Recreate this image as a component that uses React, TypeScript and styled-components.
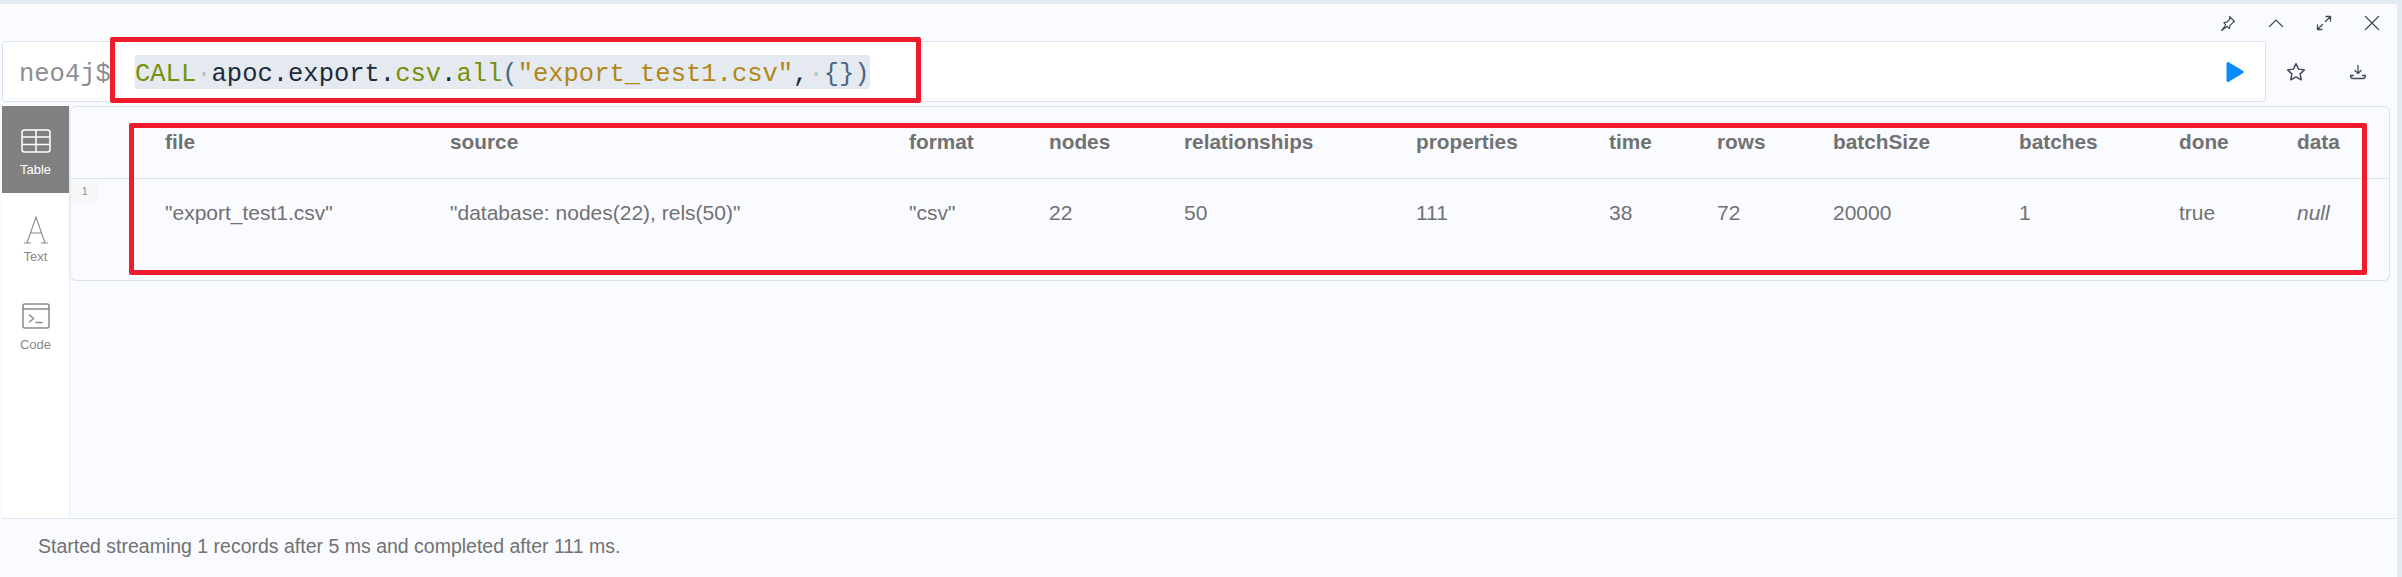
import React from "react";
import styled, { createGlobalStyle } from "styled-components";

const GlobalStyle = createGlobalStyle`
  html, body {
    margin: 0;
    padding: 0;
    background: #e3ebf3;
    overflow: hidden;
  }
  * { box-sizing: border-box; }
`;

const Frame = styled.div`
  width: 2397px;
  height: 573px;
  margin-top: 4px;
  background: #f9fbfe;
  border-top-right-radius: 3px;
  font-family: "Liberation Sans", Arial, sans-serif;
  color: #717172;
  display: flex;
  flex-direction: column;
`;

const TitleBar = styled.div`
  height: 37px;
  padding: 0 9px 0 0;
  display: flex;
  justify-content: flex-end;
  align-items: center;
  gap: 16px;
`;

const IconButton = styled.div`
  width: 32px;
  height: 32px;
  display: flex;
  align-items: center;
  justify-content: center;
  color: #3c4a57;
`;

const EditorRow = styled.div`
  display: flex;
  align-items: center;
  height: 61px;
  margin-left: 2px;
`;

const Editor = styled.div`
  position: relative;
  width: 2264px;
  height: 61px;
  background: #fff;
  border: 1px solid #d7e2ec;
  border-radius: 3px;
  display: flex;
  align-items: center;
  padding: 0 21px 0 16px;
  font-family: "Liberation Mono", monospace;
  font-size: 25.5px;
`;

const Prompt = styled.span`
  width: 116px;
  color: #8a8f94;
  white-space: pre;
  padding-top: 5px;
`;

const Selection = styled.code`
  height: 34px;
  font: inherit;
  line-height: 39px;
  background: #e5eaf1;
  border-radius: 2px;
  white-space: pre;
  color: #1d2b3a;
`;

const Token = styled.span<{ $tone: string }>`
  color: ${({ $tone }) => $tone};
`;

const Dot = styled.span`
  color: #b6c2cc;
`;

const RunButton = styled.div`
  margin-left: auto;
  display: flex;
  align-items: center;
`;

const EditorActions = styled.div`
  display: flex;
  align-items: center;
  margin-left: 14px;
  gap: 30px;
  color: #26323e;
`;

const Body = styled.div`
  flex: 1;
  display: flex;
  flex-direction: column;
  margin-top: 4px;
`;

const Main = styled.div`
  height: 412px;
  display: flex;
  margin-left: 2px;
`;

const Sidebar = styled.nav`
  width: 68px;
  background: #fff;
  border-right: 1px solid #e4ebf2;
  border-radius: 0 0 3px 3px;
  flex-shrink: 0;
`;

const SideTab = styled.div<{ $active?: boolean; $gap: number }>`
  height: 87px;
  display: flex;
  flex-direction: column;
  align-items: center;
  padding-top: 23px;
  gap: ${({ $gap }) => $gap}px;
  font-size: 13px;
  background: ${({ $active }) => ($active ? "#808080" : "transparent")};
  color: ${({ $active }) => ($active ? "#ffffff" : "#8a8a8a")};
`;

const ResultPanel = styled.div`
  position: relative;
  height: 175px;
  width: 2320px;
  background: #f9fbfe;
  border: 1px solid #dbe4ec;
  border-left-color: #e4ebf2;
  border-radius: 6px;
`;

const HeaderRow = styled.div`
  height: 72px;
  border-bottom: 1px solid #d9e4ee;
  display: grid;
  align-items: center;
  grid-template-columns: 94px 285px 459px 140px 135px 232px 193px 108px 116px 186px 160px 118px 90px;
`;

const DataRow = styled.div`
  position: relative;
  height: 101px;
  display: grid;
  padding-top: 21px;
  grid-template-columns: 94px 285px 459px 140px 135px 232px 193px 108px 116px 186px 160px 118px 90px;
`;

const HeaderCell = styled.div`
  font-size: 20.8px;
  font-weight: 700;
  line-height: 24px;
  padding-bottom: 1px;
  white-space: nowrap;
`;

const DataCell = styled.div<{ $italic?: boolean }>`
  font-size: 21px;
  line-height: 26px;
  white-space: nowrap;
  font-style: ${({ $italic }) => ($italic ? "italic" : "normal")};
`;

const RowNumber = styled.span`
  position: absolute;
  top: 0;
  left: 0;
  width: 27px;
  height: 26px;
  padding: 7px 0 0 11px;
  background: #f6f8fa;
  color: #8a8a8a;
  font-size: 10px;
  line-height: 12px;
`;

const Callout = styled.div`
  position: absolute;
  border: 5px solid #f01c2c;
  border-radius: 2px;
  pointer-events: none;
`;

const EditorCallout = styled(Callout)`
  left: 107px;
  top: -5px;
  width: 811px;
  height: 66px;
`;

const TableCallout = styled(Callout)`
  left: 58px;
  top: 16px;
  width: 2238px;
  height: 152px;
`;

const StatusBar = styled.div`
  height: 55px;
  border-top: 1px solid #dbe6f1;
  margin-left: 2px;
  padding: 0 0 0 36px;
  display: flex;
  align-items: center;
  font-size: 19.5px;
  color: #717172;
`;

const columns = ["file", "source", "format", "nodes", "relationships", "properties", "time", "rows", "batchSize", "batches", "done", "data"];
const values = ['"export_test1.csv"', '"database: nodes(22), rels(50)"', '"csv"', "22", "50", "111", "38", "72", "20000", "1", "true", "null"];

const olive = "#75900a";
const amber = "#b2861a";
const slate = "#4a6785";

export default function App() {
  return (
    <>
      <GlobalStyle />
      <Frame>
        <TitleBar>
          <IconButton>
            <svg width="16" height="16" viewBox="0 0 16 16" fill="none" stroke="currentColor" strokeWidth="1.2" strokeLinejoin="round" strokeLinecap="round">
              <path d="M9.5 1.5l5 5-1.2.6-3.4 3.6-.5 3-2.3-2.3-5.4 4 4-5.4L3.9 7.7l3-.5 3.1-3.6z" />
            </svg>
          </IconButton>
          <IconButton>
            <svg width="16" height="16" viewBox="0 0 16 16" fill="none" stroke="currentColor" strokeWidth="1.2" strokeLinecap="round">
              <path d="M1.5 11.5L8 5l6.5 6.5" />
            </svg>
          </IconButton>
          <IconButton>
            <svg width="16" height="16" viewBox="0 0 16 16" fill="none" stroke="currentColor" strokeWidth="1.3" strokeLinecap="round" strokeLinejoin="round">
              <path d="M10 1.5h4.500V6M14.500 1.500L9.500 6.500M6 14.500H1.500V10M1.500 14.500l5-5" />
            </svg>
          </IconButton>
          <IconButton>
            <svg width="16" height="16" viewBox="0 0 16 16" fill="none" stroke="currentColor" strokeWidth="1.2" strokeLinecap="round">
              <path d="M1.5 1.5l13 13M14.5 1.5l-13 13" />
            </svg>
          </IconButton>
        </TitleBar>
        <EditorRow>
          <Editor>
            <Prompt>neo4j$</Prompt>
            <Selection>
              <Token $tone={olive}>CALL</Token>
              <Dot>·</Dot>
              apoc.export.
              <Token $tone={olive}>csv</Token>.<Token $tone={olive}>all</Token>
              <Token $tone={slate}>(</Token>
              <Token $tone={amber}>"export_test1.csv"</Token>,<Dot>·</Dot>
              <Token $tone={slate}>{"{})"}</Token>
            </Selection>
            <EditorCallout />
            <RunButton>
              <svg width="18" height="22" viewBox="0 0 18 22">
                <path d="M2 2.5v17L16 11z" fill="#0b8cfb" stroke="#0b8cfb" strokeWidth="3" strokeLinejoin="round" />
              </svg>
            </RunButton>
          </Editor>
          <EditorActions>
            <IconButton>
              <svg width="20" height="20" viewBox="0 0 18 18" fill="none" stroke="currentColor" strokeWidth="1.3" strokeLinejoin="round">
                <path d="M9 1.5l2.3 4.9 5.2.7-3.8 3.6 1 5.3L9 13.4l-4.7 2.6 1-5.3L1.5 7.1l5.2-.7z" />
              </svg>
            </IconButton>
            <IconButton>
              <svg width="18" height="18" viewBox="0 0 18 18" fill="none" stroke="currentColor" strokeWidth="1.3" strokeLinecap="round" strokeLinejoin="round">
                <path d="M9 2.5v8M6 7.5l3 3 3-3M1.5 12.5c0 2 1 3 2.5 3h10c1.500 0 2.500-1 2.500-3M1.500 12.500h3M16.500 12.500h-3" />
              </svg>
            </IconButton>
          </EditorActions>
        </EditorRow>
        <Body>
          <Main>
            <Sidebar>
              <SideTab $active $gap={9}>
                <svg width="30" height="24" viewBox="0 0 30 24" fill="none" stroke="currentColor" strokeWidth="1.5">
                  <rect x="1" y="1" width="28" height="22" rx="2.5" />
                  <path d="M1 8h28M1 15.500h28M15 1v22" />
                </svg>
                Table
              </SideTab>
              <SideTab $gap={5}>
                <svg width="26" height="28" viewBox="0 0 26 28" fill="none" stroke="currentColor" strokeWidth="1.1">
                  <path d="M1 27h7M18 27h7M4 27L13 1l9 26M7.500 17h11" />
                </svg>
                Text
              </SideTab>
              <SideTab $gap={8}>
                <svg width="28" height="26" viewBox="0 0 28 26" fill="none" stroke="currentColor" strokeWidth="1.5" strokeLinecap="round">
                  <rect x="1" y="1" width="26" height="24" rx="2" />
                  <path d="M1 6h26M7.500 12l4 3.500-4 3.500M14 19.500h6" />
                </svg>
                Code
              </SideTab>
            </Sidebar>
            <ResultPanel>
              <HeaderRow>
                <span />
                {columns.map((name) => (
                  <HeaderCell key={name}>{name}</HeaderCell>
                ))}
              </HeaderRow>
              <DataRow>
                <RowNumber>1</RowNumber>
                <span />
                {values.map((value) => (
                  <DataCell key={value} $italic={value === "null"}>
                    {value}
                  </DataCell>
                ))}
              </DataRow>
              <TableCallout />
            </ResultPanel>
          </Main>
          <StatusBar>Started streaming 1 records after 5 ms and completed after 111 ms.</StatusBar>
        </Body>
      </Frame>
    </>
  );
}
